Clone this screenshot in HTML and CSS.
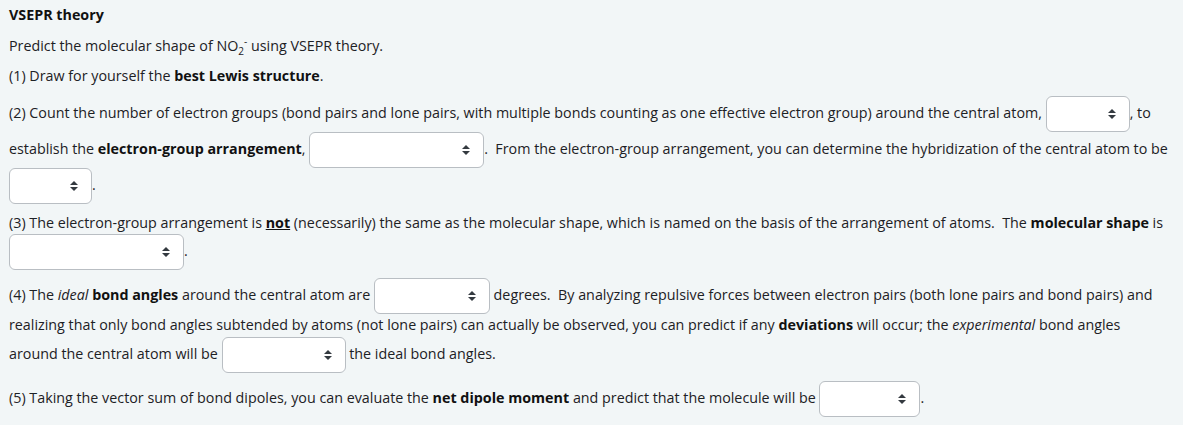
FILE: index.html
```html
<!DOCTYPE html>
<html>
<head>
<meta charset="utf-8">
<link rel="stylesheet" href="styles.css">
</head>
<body>
<div class="q">
  <p class="title"><b>VSEPR theory</b></p>
  <p>Predict the molecular shape of NO<sub>2</sub><sup>-</sup> using VSEPR theory.</p>
  <p>(1) Draw for yourself the <b>best Lewis structure</b>.</p>
  <p>(2) Count the number of electron groups (bond pairs and lone pairs, with multiple bonds counting as one effective electron group) around the central atom, <span class="sel w84"><svg viewBox="0 0 4 5" width="8" height="10"><path d="M2 0L0 2h4zm0 5L0 3h4z"/></svg></span>, to establish the <b>electron-group arrangement</b>, <span class="sel w175"><svg viewBox="0 0 4 5" width="8" height="10"><path d="M2 0L0 2h4zm0 5L0 3h4z"/></svg></span>.&nbsp; From the electron-group arrangement, you can determine the hybridization of the central atom to be <span class="sel w83"><svg viewBox="0 0 4 5" width="8" height="10"><path d="M2 0L0 2h4zm0 5L0 3h4z"/></svg></span>.</p>
  <p>(3) The electron-group arrangement is <b><u>not</u></b> (necessarily) the same as the molecular shape, which is named on the basis of the arrangement of atoms.&nbsp; The <b>molecular shape</b> is <span class="sel w175"><svg viewBox="0 0 4 5" width="8" height="10"><path d="M2 0L0 2h4zm0 5L0 3h4z"/></svg></span>.</p>
  <p>(4) The <i>ideal</i> <b>bond angles</b> around the central atom are <span class="sel w116"><svg viewBox="0 0 4 5" width="8" height="10"><path d="M2 0L0 2h4zm0 5L0 3h4z"/></svg></span> degrees.&nbsp; By analyzing repulsive forces between electron pairs (both lone pairs and bond pairs) and realizing that only bond angles subtended by atoms (not lone pairs) can actually be observed, you can predict if any <b>deviations</b> will occur; the <i>experimental</i> bond angles around the central atom will be <span class="sel w124"><svg viewBox="0 0 4 5" width="8" height="10"><path d="M2 0L0 2h4zm0 5L0 3h4z"/></svg></span> the ideal bond angles.</p>
  <p>(5) Taking the vector sum of bond dipoles, you can evaluate the <b>net dipole moment</b> and predict that the molecule will be <span class="sel w101"><svg viewBox="0 0 4 5" width="8" height="10"><path d="M2 0L0 2h4zm0 5L0 3h4z"/></svg></span>.</p>
</div>
</body>
</html>
```
FILE: styles.css
```css
html, body {
  margin: 0;
  padding: 0;
  background: #f2f6f7;
}
body {
  font-family: "Open Sans", "Noto Sans", sans-serif;
  font-size: 14.3px;
  color: #1d2125;
}
.q {
  padding: 4px 14px 8px 9px;
}
p {
  margin: 0 0 8px 0;
  line-height: 22.5px;
}
b {
  font-weight: 700;
  color: #111;
}
sub, sup {
  font-size: 10px;
  line-height: 0;
}
.sel {
  display: inline-flex;
  align-items: center;
  justify-content: flex-end;
  box-sizing: border-box;
  height: 36px;
  padding-right: 13px;
  background: #fff;
  border: 1px solid #b9bec3;
  border-radius: 6px;
  vertical-align: middle;
}
.sel svg {
  fill: #343a40;
  display: block;
}
.w83 { width: 83px; }
.w84 { width: 84px; }
.w101 { width: 101px; }
.w116 { width: 116px; }
.w124 { width: 124px; }
.w175 { width: 175px; }
```
